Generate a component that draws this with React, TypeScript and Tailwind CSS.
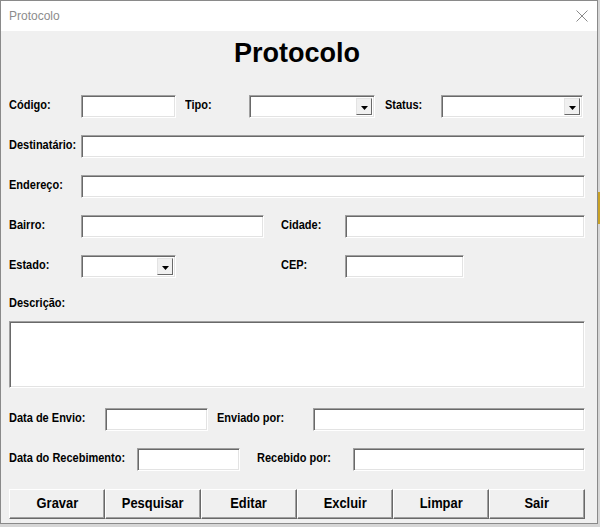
import React from "react";

const FONT = { fontFamily: '"Liberation Sans", Arial, sans-serif' };

function TextBox({ className = "" }: { className?: string }) {
  return (
    <div
      className={`h-[23px] bg-white border-t border-l border-t-[#a0a0a0] border-l-[#a0a0a0] border-b border-r border-b-white border-r-white shadow-[inset_1px_1px_0_#696969,inset_-1px_-1px_0_#e3e3e3] ${className}`}
    />
  );
}

function Combo({ className = "" }: { className?: string }) {
  return (
    <div
      className={`h-[23px] bg-white flex justify-end border-t border-l border-t-[#a0a0a0] border-l-[#a0a0a0] border-b border-r border-b-white border-r-white shadow-[inset_1px_1px_0_#696969,inset_-1px_-1px_0_#e3e3e3] p-[2px] ${className}`}
    >
      <div className="w-[16px] h-full bg-[#f0f0f0] border-t border-l border-t-[#e3e3e3] border-l-[#e3e3e3] border-b border-r border-b-[#696969] border-r-[#696969] flex items-center justify-center pt-[2px]">
        <svg width="7" height="4" viewBox="0 0 7 4">
          <polygon points="0,0 7,0 3.5,4" fill="#000" />
        </svg>
      </div>
    </div>
  );
}

// o texto do formulário é estreito: fonte maior comprimida na horizontal
function Label({ children, className = "" }: { children: React.ReactNode; className?: string }) {
  return (
    <span className={`shrink-0 flex items-center h-[13px] mb-[3px] ${className}`}>
      <span className="block origin-left scale-x-[0.88] text-[12.5px] leading-none font-bold text-black whitespace-nowrap">
        {children}
      </span>
    </span>
  );
}

function Button({ children }: { children: React.ReactNode }) {
  return (
    <div className="w-[96px] h-[30px] bg-[#f0f0f0] border-t border-l border-t-white border-l-white border-b border-r border-b-[#696969] border-r-[#696969] shadow-[inset_-1px_-1px_0_#a0a0a0] flex items-center justify-center">
      <span className="inline-block scale-x-[0.89] text-[14.5px] font-bold text-black whitespace-nowrap">
        {children}
      </span>
    </div>
  );
}

export default function App() {
  return (
    <div className="w-[600px] h-[527px] flex bg-[#d6d6d6] overflow-hidden" style={FONT}>
      <div className="w-[598px] h-[524px] border border-[#8a8a8a] bg-[#f0f0f0] flex flex-col shrink-0">
        {/* Barra de título */}
        <div className="h-[30px] bg-white flex items-center justify-between pl-[8px] pr-[9px]">
          <span className="text-[12px] text-[#8c8c8c]">Protocolo</span>
          <svg width="12" height="12" viewBox="0 0 12 12">
            <path d="M0.5 0.5 L11.5 11.5 M11.5 0.5 L0.5 11.5" stroke="#8a8a8a" strokeWidth="1" />
          </svg>
        </div>

        {/* Corpo */}
        <div className="flex flex-col pl-[8px] pr-[12px]">
          <div className="h-[44px] flex items-center justify-center">
            <h1 className="text-[27px] font-bold text-black leading-none">Protocolo</h1>
          </div>

          {/* Código / Tipo / Status */}
          <div className="mt-[20px] flex items-center">
            <Label className="w-[72px]">Código:</Label>
            <TextBox className="w-[95px]" />
            <Label className="ml-[9px] w-[64px]">Tipo:</Label>
            <Combo className="w-[126px]" />
            <Label className="ml-[10px] w-[56px]">Status:</Label>
            <Combo className="w-[142px]" />
          </div>

          <div className="mt-[17px] flex items-center">
            <Label className="w-[72px]">Destinatário:</Label>
            <TextBox className="flex-1" />
          </div>

          <div className="mt-[17px] flex items-center">
            <Label className="w-[72px]">Endereço:</Label>
            <TextBox className="flex-1" />
          </div>

          <div className="mt-[17px] flex items-center">
            <Label className="w-[72px]">Bairro:</Label>
            <TextBox className="w-[183px]" />
            <Label className="ml-[17px] w-[64px]">Cidade:</Label>
            <TextBox className="flex-1" />
          </div>

          <div className="mt-[17px] flex items-center">
            <Label className="w-[72px]">Estado:</Label>
            <Combo className="w-[95px]" />
            <Label className="ml-[105px] w-[64px]">CEP:</Label>
            <TextBox className="w-[119px]" />
          </div>

          <div className="mt-[19px] h-[16px] flex items-center">
            <Label>Descrição:</Label>
          </div>
          <TextBox className="mt-[8px] !h-[67px]" />

          <div className="mt-[20px] flex items-center">
            <Label className="w-[96px]">Data de Envio:</Label>
            <TextBox className="w-[103px]" />
            <Label className="ml-[9px] w-[96px]">Enviado por:</Label>
            <TextBox className="flex-1" />
          </div>

          <div className="mt-[17px] flex items-center">
            <Label className="w-[128px]">Data do Recebimento:</Label>
            <TextBox className="w-[103px]" />
            <Label className="ml-[17px] w-[96px]">Recebido por:</Label>
            <TextBox className="flex-1" />
          </div>

          {/* Botões */}
          <div className="mt-[18px] flex">
            <Button>Gravar</Button>
            <Button>Pesquisar</Button>
            <Button>Editar</Button>
            <Button>Excluir</Button>
            <Button>Limpar</Button>
            <Button>Sair</Button>
          </div>
        </div>
      </div>
      <div className="flex-1 flex flex-col">
        <div className="h-[192px]" />
        <div className="h-[32px] bg-[#c9a227]" />
      </div>
    </div>
  );
}
